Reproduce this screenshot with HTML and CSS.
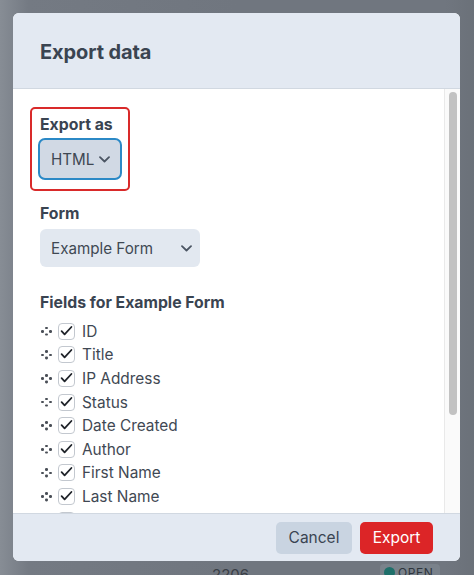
FILE: index.html
```html
<!DOCTYPE html>
<html lang="en">
<head>
<meta charset="utf-8">
<title>Export data</title>
<link rel="stylesheet" href="styles.css">
</head>
<body>
<div class="backdrop">
  <div class="modal">
    <div class="modal-header">
      <h2 class="modal-title">Export data</h2>
    </div>
    <div class="modal-body">
      <div class="modal-content">
        <div class="field highlight">
          <label class="field-label">Export as</label>
          <div class="select select-focus">
            <span>HTML</span>
            <svg class="chev" width="11" height="7" viewBox="0 0 11 7"><path d="M1 1.2 L5.5 5.5 L10 1.2" fill="none" stroke="#4b5563" stroke-width="1.8" stroke-linecap="round" stroke-linejoin="round"/></svg>
          </div>
        </div>
        <div class="field form-field">
          <label class="field-label">Form</label>
          <div class="select select-wide">
            <span>Example Form</span>
            <svg class="chev" width="11" height="7" viewBox="0 0 11 7"><path d="M1 1.2 L5.5 5.5 L10 1.2" fill="none" stroke="#4b5563" stroke-width="1.8" stroke-linecap="round" stroke-linejoin="round"/></svg>
          </div>
        </div>
        <div class="field fields">
          <label class="field-label">Fields for Example Form</label>
          <ul class="field-list">
            <li class="row"><span class="grip"></span><span class="check"><svg viewBox="0 0 17 17" width="17" height="17"><path d="M3.6 8.2 L6.6 11.4 L13.4 4" fill="none" stroke="#1f2329" stroke-width="1.8" stroke-linecap="round" stroke-linejoin="round"/></svg></span><span class="row-label">ID</span></li>
            <li class="row"><span class="grip"></span><span class="check"><svg viewBox="0 0 17 17" width="17" height="17"><path d="M3.6 8.2 L6.6 11.4 L13.4 4" fill="none" stroke="#1f2329" stroke-width="1.8" stroke-linecap="round" stroke-linejoin="round"/></svg></span><span class="row-label">Title</span></li>
            <li class="row"><span class="grip"></span><span class="check"><svg viewBox="0 0 17 17" width="17" height="17"><path d="M3.6 8.2 L6.6 11.4 L13.4 4" fill="none" stroke="#1f2329" stroke-width="1.8" stroke-linecap="round" stroke-linejoin="round"/></svg></span><span class="row-label">IP Address</span></li>
            <li class="row"><span class="grip"></span><span class="check"><svg viewBox="0 0 17 17" width="17" height="17"><path d="M3.6 8.2 L6.6 11.4 L13.4 4" fill="none" stroke="#1f2329" stroke-width="1.8" stroke-linecap="round" stroke-linejoin="round"/></svg></span><span class="row-label">Status</span></li>
            <li class="row"><span class="grip"></span><span class="check"><svg viewBox="0 0 17 17" width="17" height="17"><path d="M3.6 8.2 L6.6 11.4 L13.4 4" fill="none" stroke="#1f2329" stroke-width="1.8" stroke-linecap="round" stroke-linejoin="round"/></svg></span><span class="row-label">Date Created</span></li>
            <li class="row"><span class="grip"></span><span class="check"><svg viewBox="0 0 17 17" width="17" height="17"><path d="M3.6 8.2 L6.6 11.4 L13.4 4" fill="none" stroke="#1f2329" stroke-width="1.8" stroke-linecap="round" stroke-linejoin="round"/></svg></span><span class="row-label">Author</span></li>
            <li class="row"><span class="grip"></span><span class="check"><svg viewBox="0 0 17 17" width="17" height="17"><path d="M3.6 8.2 L6.6 11.4 L13.4 4" fill="none" stroke="#1f2329" stroke-width="1.8" stroke-linecap="round" stroke-linejoin="round"/></svg></span><span class="row-label">First Name</span></li>
            <li class="row"><span class="grip"></span><span class="check"><svg viewBox="0 0 17 17" width="17" height="17"><path d="M3.6 8.2 L6.6 11.4 L13.4 4" fill="none" stroke="#1f2329" stroke-width="1.8" stroke-linecap="round" stroke-linejoin="round"/></svg></span><span class="row-label">Last Name</span></li>
            <li class="row"><span class="grip"></span><span class="check"><svg viewBox="0 0 17 17" width="17" height="17"><path d="M3.6 8.2 L6.6 11.4 L13.4 4" fill="none" stroke="#1f2329" stroke-width="1.8" stroke-linecap="round" stroke-linejoin="round"/></svg></span><span class="row-label">Email</span></li>
          </ul>
        </div>
      </div>
      <div class="scrollbar"><div class="thumb"></div></div>
    </div>
    <div class="modal-footer">
      <button class="btn btn-cancel">Cancel</button>
      <button class="btn btn-export">Export</button>
    </div>
  </div>
  <div class="under-row">
    <span class="under-num">2206</span>
    <span class="under-badge"><span class="dot"></span>OPEN</span>
  </div>
</div>
</body>
</html>
```

FILE: styles.css
```css
html, body {
  margin: 0;
  padding: 0;
}
body {
  width: 474px;
  height: 575px;
  overflow: hidden;
  font-family: Inter, "Noto Sans", "Liberation Sans", sans-serif;
  color: #3a4451;
}
.backdrop {
  height: 575px;
  background: linear-gradient(90deg, #878d95 0%, #747a83 6%, #70767f 50%, #70767f 94%, #6b7179 100%);
  padding-top: 13px;
  box-sizing: border-box;
  overflow: hidden;
}
.modal {
  margin-left: 13px;
  width: 447px;
  height: 548px;
  background: #fff;
  border-radius: 6px;
  overflow: hidden;
  display: flex;
  flex-direction: column;
}
.modal-header {
  height: 76px;
  flex: none;
  background: #e3e9f2;
  border-bottom: 1px solid #d1d8e1;
  display: flex;
  align-items: center;
  padding: 3px 0 0 27px;
  box-sizing: border-box;
}
.modal-title {
  margin: 0;
  font-size: 20px;
  font-weight: 700;
  color: #3a4451;
  letter-spacing: -0.1px;
}
.modal-body {
  flex: 1;
  display: flex;
  overflow: hidden;
  min-height: 0;
}
.modal-content {
  flex: 1;
  padding: 18px 0 0 27px;
  overflow: hidden;
}
.scrollbar {
  width: 16px;
  flex: none;
  background: #fafafa;
  border-left: 1px solid #e9e9e9;
  padding: 3px 3px 0 4px;
  box-sizing: border-box;
}
.thumb {
  height: 323px;
  background: #c2c2c2;
  border-radius: 5px;
}
.field {
  display: flex;
  flex-direction: column;
  align-items: flex-start;
}
.field-label {
  font-size: 15.8px;
  font-weight: 700;
  line-height: 20px;
  color: #3a4451;
}
.highlight {
  margin-left: -10px;
  width: 100px;
  height: 84px;
  box-sizing: border-box;
  border: 2px solid #d92a2a;
  border-radius: 5px;
  padding: 6px 0 0 8px;
  margin-bottom: 12.5px;
}
.select {
  display: flex;
  align-items: center;
  justify-content: space-between;
  box-sizing: border-box;
  font-size: 15.2px;
  color: #3f4853;
  border-radius: 6px;
}
.select-focus {
  margin-top: 3px;
  margin-left: -2px;
  width: 84px;
  height: 42px;
  background: #d1d9e4;
  border: 2px solid #2b89c6;
  padding: 0 10px 0 11px;
  border-radius: 7px;
}
.select-wide {
  margin-top: 5.5px;
  width: 160px;
  height: 38px;
  background: #e2e8f0;
  padding: 0 8px 0 11px;
}
.chev {
  display: block;
}
.fields {
  margin-top: 25.5px;
}
.field-list {
  list-style: none;
  margin: 7px 0 0 0;
  padding: 0;
}
.row {
  height: 23.6px;
  display: flex;
  align-items: center;
}
.grip {
  position: relative;
  width: 11px;
  height: 9px;
  margin-left: 1px;
  margin-right: 6px;
  flex: none;
}
.grip::before,
.grip::after {
  content: "";
  position: absolute;
  width: 2.6px;
  height: 2.6px;
  border-radius: 50%;
  background: #4a4f57;
}
.grip::before {
  left: 4.2px;
  top: 0;
  box-shadow: 0 6.4px 0 #4a4f57;
}
.grip::after {
  left: 0.2px;
  top: 3.2px;
  box-shadow: 8px 0 0 #4a4f57;
}
.check {
  width: 17px;
  height: 17px;
  box-sizing: border-box;
  border: 1px solid #c3c8cf;
  border-radius: 4px;
  background: #fff;
  position: relative;
  flex: none;
}
.check svg {
  position: absolute;
  left: -1px;
  top: -1px;
  display: block;
}
.row-label {
  margin-left: 7px;
  font-size: 15.4px;
  color: #3f4853;
}
.modal-footer {
  height: 48px;
  flex: none;
  background: #e3e9f2;
  border-top: 1px solid #d1d8e1;
  box-sizing: border-box;
  display: flex;
  align-items: center;
  justify-content: flex-end;
  padding-right: 27px;
  gap: 8px;
}
.btn {
  height: 32px;
  border: none;
  border-radius: 5px;
  font-family: inherit;
  font-size: 15.5px;
  padding: 0;
}
.btn-cancel {
  width: 76px;
  background: #c9d4e1;
  color: #3a4451;
}
.btn-export {
  width: 73px;
  background: #dc2527;
  color: #fff;
}
.under-row {
  position: relative;
  height: 20px;
  margin-top: 4px;
  font-size: 15px;
  color: #2b3038;
}
.under-num {
  position: absolute;
  left: 212px;
  top: 0;
  color: #3a3f47;
}
.under-badge {
  position: absolute;
  left: 380px;
  top: -1px;
  padding: 1px 6px 0 4px;
  background: #7a828b;
  border-radius: 4px;
  font-size: 12px;
  letter-spacing: 0.6px;
  color: #2f363e;
  display: flex;
  align-items: center;
  gap: 3px;
}
.dot {
  width: 11px;
  height: 11px;
  border-radius: 50%;
  background: #1e6f6a;
}
```
